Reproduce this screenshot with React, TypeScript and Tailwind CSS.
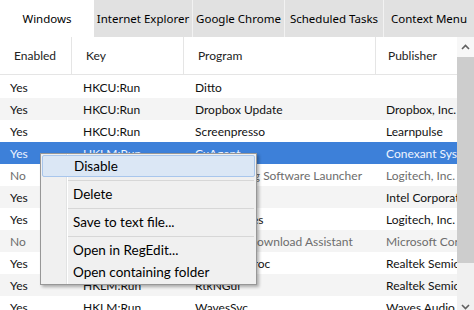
import React from 'react';

type Row = {
  enabled: string;
  key: string;
  program: string;
  publisher: string;
  selected?: boolean;
};

const tabs = [
  { label: 'Windows', width: 'w-[94px]', active: true },
  { label: 'Internet Explorer', width: 'w-[98px]' },
  { label: 'Google Chrome', width: 'w-[92px]' },
  { label: 'Scheduled Tasks', width: 'w-[99px]' },
  { label: 'Context Menu', width: 'w-[91px]' },
];

const rows: Row[] = [
  { enabled: 'Yes', key: 'HKCU:Run', program: 'Ditto', publisher: '' },
  { enabled: 'Yes', key: 'HKCU:Run', program: 'Dropbox Update', publisher: 'Dropbox, Inc.' },
  { enabled: 'Yes', key: 'HKCU:Run', program: 'Screenpresso', publisher: 'Learnpulse' },
  { enabled: 'Yes', key: 'HKLM:Run', program: 'CxAgent', publisher: 'Conexant Systems, Inc.', selected: true },
  { enabled: 'No', key: 'HKLM:Run', program: 'Logi Gaming Software Launcher', publisher: 'Logitech, Inc.' },
  { enabled: 'Yes', key: 'HKLM:Run', program: 'IAStorIcon', publisher: 'Intel Corporation' },
  { enabled: 'Yes', key: 'HKLM:Run', program: 'Logi Updates', publisher: 'Logitech, Inc.' },
  { enabled: 'No', key: 'HKLM:Run', program: 'Windows Download Assistant', publisher: 'Microsoft Corporation' },
  { enabled: 'Yes', key: 'HKLM:Run', program: 'RtHDVBgProc', publisher: 'Realtek Semiconductor' },
  { enabled: 'Yes', key: 'HKLM:Run', program: 'RtkNGui', publisher: 'Realtek Semiconductor' },
  { enabled: 'Yes', key: 'HKLM:Run', program: 'WavesSvc', publisher: 'Waves Audio Ltd.' },
];

const menuItems = ['Disable', 'Delete', 'Save to text file...', 'Open in RegEdit...', 'Open containing folder'];

function Chevron({ up }: { up?: boolean }) {
  return (
    <svg width="9" height="6" viewBox="0 0 9 6">
      <polyline
        points={up ? '1,5 4.5,1.5 8,5' : '1,1 4.5,4.5 8,1'}
        fill="none"
        stroke="#606060"
        strokeWidth="1.6"
      />
    </svg>
  );
}

export default function App() {
  return (
    <div className="relative w-[474px] h-[310px] overflow-hidden bg-white font-['Lato',sans-serif] text-[12px] text-[#111]">
      {/* Tabs */}
      <div className="flex h-[37px] bg-[#e1e1e1] font-['Noto_Sans',sans-serif] text-[11.5px] text-black">
        {tabs.map((t, i) => (
          <div
            key={t.label}
            className={`${t.width} flex items-center justify-center whitespace-nowrap ${
              t.active ? 'bg-white' : 'bg-[#e1e1e1]'
            } ${i > 1 ? 'border-l border-[#f2f2f2]' : ''}`}
          >
            {t.label}
          </div>
        ))}
      </div>

      <div className="flex">
        {/* Grid */}
        <div className="w-[457px] flex flex-col">
          <div className="flex h-[38px] border-b border-[#e5e5e5] items-stretch text-[#222]">
            <div className="w-[72px] pl-[14px] flex items-center border-r border-[#e5e5e5]">Enabled</div>
            <div className="w-[112px] pl-[14px] flex items-center border-r border-[#e5e5e5]">Key</div>
            <div className="w-[192px] pl-[14px] flex items-center border-r border-[#e5e5e5]">Program</div>
            <div className="flex-1 pl-[12px] flex items-center">Publisher</div>
          </div>
          <div className="pt-px">
            {rows.map((r, i) => {
              const bg = r.selected ? 'bg-[#3d80d9] text-[#eef4ff]' : i % 2 === 1 ? 'bg-[#f4f4f4]' : 'bg-white';
              const color = r.selected ? '' : r.enabled === 'No' ? 'text-[#6d6d6d]' : '';
              return (
                <div key={i} className={`flex h-[22px] pt-px items-center whitespace-nowrap ${bg} ${color}`}>
                  <div className="w-[72px] pl-[10px]">{r.enabled}</div>
                  <div className="w-[112px] pl-[11px] overflow-hidden">{r.key}</div>
                  <div className="w-[192px] pl-[11px] overflow-hidden">{r.program}</div>
                  <div className="flex-1 pl-[10px] overflow-hidden">{r.publisher}</div>
                </div>
              );
            })}
          </div>
        </div>

        {/* Scrollbar */}
        <div className="w-[17px] flex flex-col bg-[#f0f0f0]">
          <div className="h-[20px] flex items-center justify-center bg-[#f7f7f7]">
            <Chevron up />
          </div>
          <div className="h-[206px] bg-[#cdcdcd]" />
          <div className="h-[34px]" />
          <div className="h-[20px] flex items-center justify-center">
            <Chevron />
          </div>
        </div>
      </div>

      {/* Context menu */}
      <div className="absolute left-[40px] top-[153px] w-[217px] border border-[#979797] bg-[#f0f0f0] py-px shadow-[2px_2px_3px_rgba(0,0,0,0.3)] text-[13.5px] text-black">
        <div className="absolute left-[25px] top-0 bottom-0 w-px bg-[#e2e3e3]" />
        <div className="absolute left-[26px] top-0 bottom-0 w-px bg-white" />
        {menuItems.map((m, i) => (
          <React.Fragment key={m}>
            {i > 0 && i < 4 && (
              <div className="h-[6px] flex items-center pl-[26px] pr-[2px]">
                <div className="h-px w-full bg-[#d7d7d7]" />
              </div>
            )}
            <div
              className={`relative h-[22px] mx-px flex items-center pl-[31px] ${
                i === 0 ? 'bg-[#dbe7f5] border border-[#a8c6ec] rounded-[2px] pl-[30px]' : ''
              }`}
            >
              {m}
            </div>
          </React.Fragment>
        ))}
      </div>
    </div>
  );
}
